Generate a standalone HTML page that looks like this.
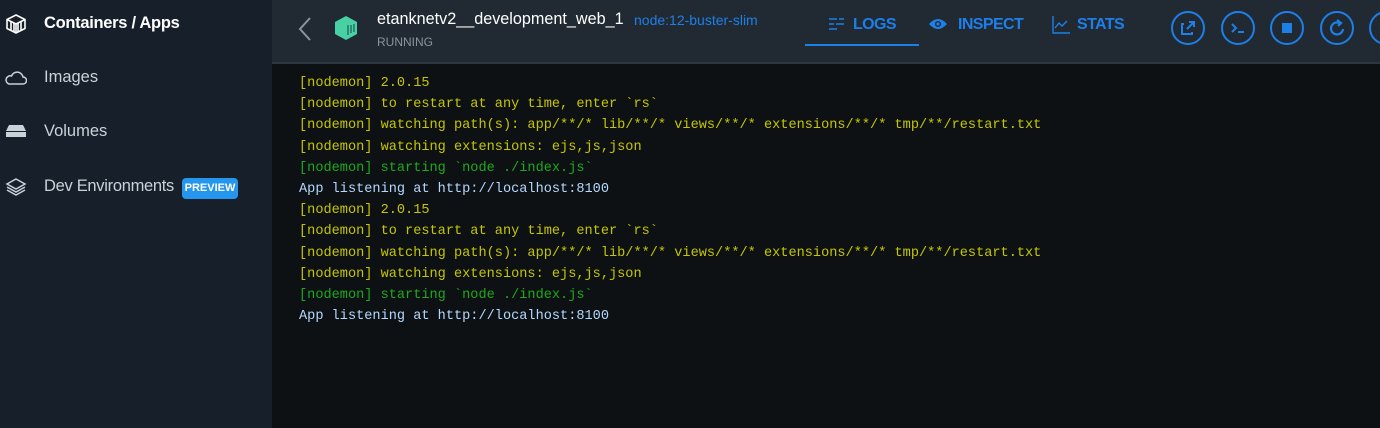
<!DOCTYPE html>
<html><head><style>
body{margin:0;width:1380px;height:428px;overflow:hidden;background:#0d1113;font-family:"Liberation Sans",sans-serif;position:relative}
.side{position:absolute;left:0;top:0;width:272px;height:428px;background:#17202a}
.item{position:absolute;left:44px;font-size:16.5px;color:#c9d1d9}
.ic{position:absolute;left:5px}
.head{position:absolute;left:272px;top:0;width:1108px;height:62px;background:#212a32;border-bottom:2px solid #2c363e}
.tab{position:absolute;top:16px;font-size:16px;font-weight:bold;color:#1d7fe8;letter-spacing:-0.6px}
.btn{position:absolute;top:11px;width:30px;height:30px;border:2px solid #1d7fe8;border-radius:50%}
.log{position:absolute;left:299px;top:73px;font-family:"Liberation Mono",monospace;font-size:13.6px;line-height:21.2px;white-space:pre}
.y{color:#c6c600}.g{color:#1ea81e}.w{color:#b4d8ff}
</style></head><body>
<div class="side">
<svg class="ic" style="top:13px" width="22" height="22" viewBox="0 0 22 22" fill="none" stroke="#fff" stroke-width="1.6"><path d="M11 2L20 6.5V15.5L11 20L2 15.5V6.5Z M2 6.5L11 11L20 6.5 M11 11V20 M6 9v8 M9 10.5v8 M13 10.5v8 M16 9v8"/></svg>
<div class="item" style="top:14px;color:#fff;font-weight:bold;letter-spacing:-0.3px">Containers / Apps</div>
<svg class="ic" style="top:70px" width="22" height="16" viewBox="0 0 22 16" fill="none" stroke="#c9d1d9" stroke-width="1.5"><path d="M4 14h14a3.5 3.5 0 0 0 0-7a6 6 0 0 0-11.5-1A4 4 0 0 0 4 14z"/></svg>
<div class="item" style="top:68px">Images</div>
<svg class="ic" style="top:124px" width="22" height="14" viewBox="0 0 22 14"><path d="M4 1h14l3 6v6H1V7z" fill="#c9d1d9"/><rect x="1" y="7" width="20" height="1" fill="#17202a"/></svg>
<div class="item" style="top:122px">Volumes</div>
<svg class="ic" style="top:177px" width="22" height="20" viewBox="0 0 22 20" fill="none" stroke="#c9d1d9" stroke-width="1.5"><path d="M11 2l9 5-9 5-9-5z M2 10l9 5 9-5 M2 13l9 5 9-5"/></svg>
<div class="item" style="top:177px;letter-spacing:-0.3px">Dev Environments</div>
<div style="position:absolute;left:182px;top:178px;width:56px;height:21px;background:#2496ed;border-radius:4px;color:#fff;font-size:11px;font-weight:bold;text-align:center;line-height:21px">PREVIEW</div>
</div>
<div class="head">
<svg style="position:absolute;left:26px;top:16px" width="14" height="26" viewBox="0 0 14 26" fill="none" stroke="#8a949c" stroke-width="2"><path d="M12 2L2 13l10 11"/></svg>
<svg style="position:absolute;left:62px;top:15px" width="24" height="26" viewBox="0 0 24 26"><path d="M12 1l11 6v12l-11 6-11-6V7z" fill="#49d1a6"/><path d="M14 10v10M17 10v8M20 9v8" stroke="#1d5c4c" stroke-width="1.2"/></svg>
<div style="position:absolute;left:105px;top:10px;font-size:16.2px;color:#fff">etanknetv2__development_web_1</div>
<div style="position:absolute;left:362px;top:12px;font-size:14px;color:#1d7fe8">node:12-buster-slim</div>
<div style="position:absolute;left:105px;top:35px;font-size:12px;color:#8a949c">RUNNING</div>
<svg style="position:absolute;left:557px;top:17px" width="16" height="14" viewBox="0 0 16 14" stroke="#1d7fe8" stroke-width="1.5"><path d="M0 2h8M10 2h5M0 7h5M7 7h8M0 12h8"/></svg>
<div class="tab" style="left:581px">LOGS</div>
<div style="position:absolute;left:533px;top:44px;width:114px;height:2px;background:#1d7fe8"></div>
<svg style="position:absolute;left:656px;top:17px" width="20" height="14" viewBox="0 0 20 14"><path d="M1 7Q10-3 19 7Q10 17 1 7z" fill="#1d7fe8"/><circle cx="10" cy="7" r="3" fill="#212a32"/><circle cx="10" cy="7" r="1.6" fill="#1d7fe8"/></svg>
<div class="tab" style="left:686px">INSPECT</div>
<svg style="position:absolute;left:780px;top:16px" width="18" height="18" viewBox="0 0 18 18" fill="none" stroke="#1d7fe8" stroke-width="1.4"><path d="M1 0v17h17M3 12l4-5 3 3 5-5"/></svg>
<div class="tab" style="left:805px">STATS</div>
<div class="btn" style="left:899px"><svg width="30" height="30" viewBox="0 0 30 30" fill="none" stroke="#1d7fe8" stroke-width="2"><path d="M11 11h-2v10h10v-2 M14 16l7-7M16 9h5v5"/></svg></div>
<div class="btn" style="left:949px"><svg width="30" height="30" viewBox="0 0 30 30" fill="none" stroke="#1d7fe8" stroke-width="2"><path d="M9 11l4 4-4 4M15 19h6"/></svg></div>
<div class="btn" style="left:998px"><div style="position:absolute;left:10px;top:10px;width:10px;height:10px;background:#1d7fe8"></div></div>
<div class="btn" style="left:1048px"><svg width="30" height="30" viewBox="0 0 30 30" fill="none" stroke="#1d7fe8" stroke-width="2.2"><path d="M19 11a6 6 0 1 0 2 5M15 7l4 3-3 3"/></svg></div>
<div class="btn" style="left:1097px"></div>
</div>
<div class="log"><span class="y">[nodemon] 2.0.15
[nodemon] to restart at any time, enter `rs`
[nodemon] watching path(s): app/**/* lib/**/* views/**/* extensions/**/* tmp/**/restart.txt
[nodemon] watching extensions: ejs,js,json</span>
<span class="g">[nodemon] starting `node ./index.js`</span>
<span class="w">App listening at http://localhost:8100</span>
<span class="y">[nodemon] 2.0.15
[nodemon] to restart at any time, enter `rs`
[nodemon] watching path(s): app/**/* lib/**/* views/**/* extensions/**/* tmp/**/restart.txt
[nodemon] watching extensions: ejs,js,json</span>
<span class="g">[nodemon] starting `node ./index.js`</span>
<span class="w">App listening at http://localhost:8100</span></div>
</body></html>
